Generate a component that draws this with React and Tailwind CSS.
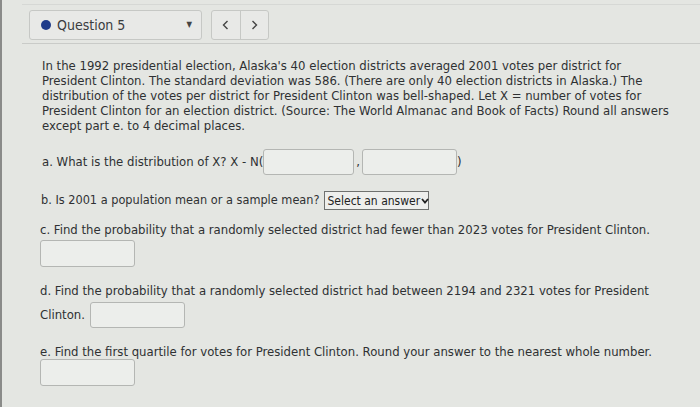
import React from "react";

const font = { fontFamily: '"Liberation Sans Narrow", "DejaVu Sans Condensed", "Liberation Sans", sans-serif' };

function Box({ className = "" }) {
  return <span className={"inline-block align-middle shrink-0 border border-[#b4b6b3] rounded-[3px] bg-[#eceeeb] " + className} />;
}

export default function App() {
  return (
    <div className="w-[700px] h-[407px] overflow-hidden bg-[#e4e6e2] border-l-2 border-[#8a8b89] text-[#2f3133] text-[13px]" style={font}>
      <div className="ml-[20px] pt-[4px] border-b border-[#c9cbc8]">
        <div className="border-t border-[#d6d8d5] flex items-center pl-[7px] pt-[5px] pb-[3px]">
          <div className="w-[173px] h-[30px] border border-[#c6c8c5] rounded-[3px] bg-[#e8e9e7] flex items-center pl-[11px] pr-[9px]">
            <span className="w-[10px] h-[10px] rounded-full bg-[#1f3c8a] mr-[6px]" />
            <span className="text-[14px] text-[#3a3c3e]">Question 5</span>
            <span className="ml-auto text-[8px] text-[#444]">▼</span>
          </div>
          <div className="ml-[9px] h-[30px] w-[58px] flex border border-[#c6c8c5] rounded-[3px] bg-[#e8e9e7]">
            <div className="flex-1 flex items-center justify-center border-r border-[#c6c8c5]">
              <svg width="7" height="10" viewBox="0 0 7 10"><path d="M5.5 1 L1.5 5 L5.5 9" fill="none" stroke="#444" strokeWidth="1.4" /></svg>
            </div>
            <div className="flex-1 flex items-center justify-center">
              <svg width="7" height="10" viewBox="0 0 7 10"><path d="M1.5 1 L5.5 5 L1.5 9" fill="none" stroke="#444" strokeWidth="1.4" /></svg>
            </div>
          </div>
        </div>
      </div>

      <div className="pl-[38px] pr-[20px]">
        <p className="mt-[14px] leading-[15px] pl-[2px] w-[633px]">
          In the 1992 presidential election, Alaska's 40 election districts averaged 2001 votes per district for President Clinton. The standard deviation was 586. (There are only 40 election districts in Alaska.) The distribution of the votes per district for President Clinton was bell-shaped. Let X = number of votes for President Clinton for an election district. (Source: The World Almanac and Book of Facts) Round all answers except part e. to 4 decimal places.
        </p>

        <div className="mt-[16px] flex items-center h-[26px] pl-[2px]">
          <span>a. What is the distribution of X? X - N(</span>
          <Box className="w-[91px] h-[26px]" />
          <span className="mx-[2px]">,</span>
          <Box className="w-[95px] h-[26px]" />
          <span>)</span>
        </div>

        <div className="mt-[16px] flex items-center h-[19px] pl-[1px]">
          <span className="whitespace-nowrap text-[12.6px]">b. Is 2001 a population mean or a sample mean?</span>
          <span className="ml-[4px] shrink-0 whitespace-nowrap h-[19px] w-[105px] border border-[#6f716f] bg-[#eeefed] flex items-center pl-[3px] text-[12px] text-[#222]">
            Select an answer
            <svg className="ml-[1px] shrink-0" width="8" height="6" viewBox="0 0 8 6"><path d="M1 1 L4 4.5 L7 1" fill="none" stroke="#222" strokeWidth="1.8" /></svg>
          </span>
        </div>

        <div className="mt-[12px] leading-[16px]">c. Find the probability that a randomly selected district had fewer than 2023 votes for President Clinton.</div>
        <Box className="mt-[2px] w-[95px] h-[27px]" />

        <div className="mt-[12px] leading-[23px]">
          d. Find the probability that a randomly selected district had between 2194 and 2321 votes for President Clinton. <Box className="ml-[1px] w-[95px] h-[26px]" />
        </div>

        <div className="mt-[17px] leading-[14px]">e. Find the first quartile for votes for President Clinton. Round your answer to the nearest whole number.</div>
        <Box className="mt-[0px] w-[95px] h-[27px]" />
      </div>
    </div>
  );
}
